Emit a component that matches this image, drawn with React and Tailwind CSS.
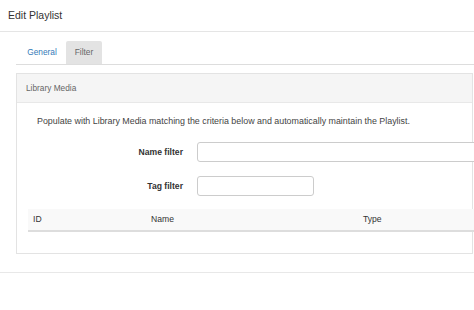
export default function App() {
  return (
    <div className="h-[310px] w-[474px] overflow-hidden bg-white font-['Liberation_Sans',Arial,sans-serif] text-[#333]">
      <div className="flex h-[32px] items-center border-b border-[#e5e5e5] pl-[8px] text-[10.5px]">Edit Playlist</div>

      <div className="pl-[16px]">
        <div className="mt-[9px] flex h-[24px] items-end border-b border-[#ddd] pl-[2px] text-[8.3px]">
          <div className="flex h-[23px] w-[48px] items-center justify-center text-[#337ab7]">General</div>
          <div className="flex h-[23px] w-[36px] items-center justify-center rounded-t-[2px] bg-[#e3e3e3] text-[#666]">Filter</div>
        </div>

        <div className="mt-[8px] h-[181px] w-[457px] border border-[#e3e3e3] text-[8.3px]">
          <div className="flex h-[29px] items-center border-b border-[#e8e8e8] bg-[#f5f5f5] pl-[9px] text-[#666]">Library Media</div>

          <div className="pl-[20px] pt-[12px] text-[8.9px] text-[#444]">Populate with Library Media matching the criteria below and automatically maintain the Playlist.</div>

          <div className="mt-[14px] flex items-center">
            <div className="w-[166px] shrink-0 text-right text-[8.6px] font-bold text-[#333]">Name filter</div>
            <div className="ml-[14px] h-[20px] w-[300px] shrink-0 rounded-[3px] border border-[#ccc] bg-white" />
          </div>
          <div className="mt-[14px] flex items-center">
            <div className="w-[166px] shrink-0 text-right text-[8.6px] font-bold text-[#333]">Tag filter</div>
            <div className="ml-[14px] h-[20px] w-[117px] shrink-0 rounded-[3px] border border-[#ccc] bg-white" />
          </div>

          <div className="ml-[11px] mt-[13px] flex h-[23px] w-[460px] items-center border-b-2 border-[#ddd] bg-[#f9f9f9] text-[8.6px] text-[#333]">
            <div className="w-[118px] shrink-0 pl-[5px]">ID</div>
            <div className="w-[212px] shrink-0 pl-[5px]">Name</div>
            <div className="pl-[5px]">Type</div>
          </div>
        </div>
      </div>

      <div className="mt-[18px] border-b border-[#e8e8e8]" />
    </div>
  )
}
